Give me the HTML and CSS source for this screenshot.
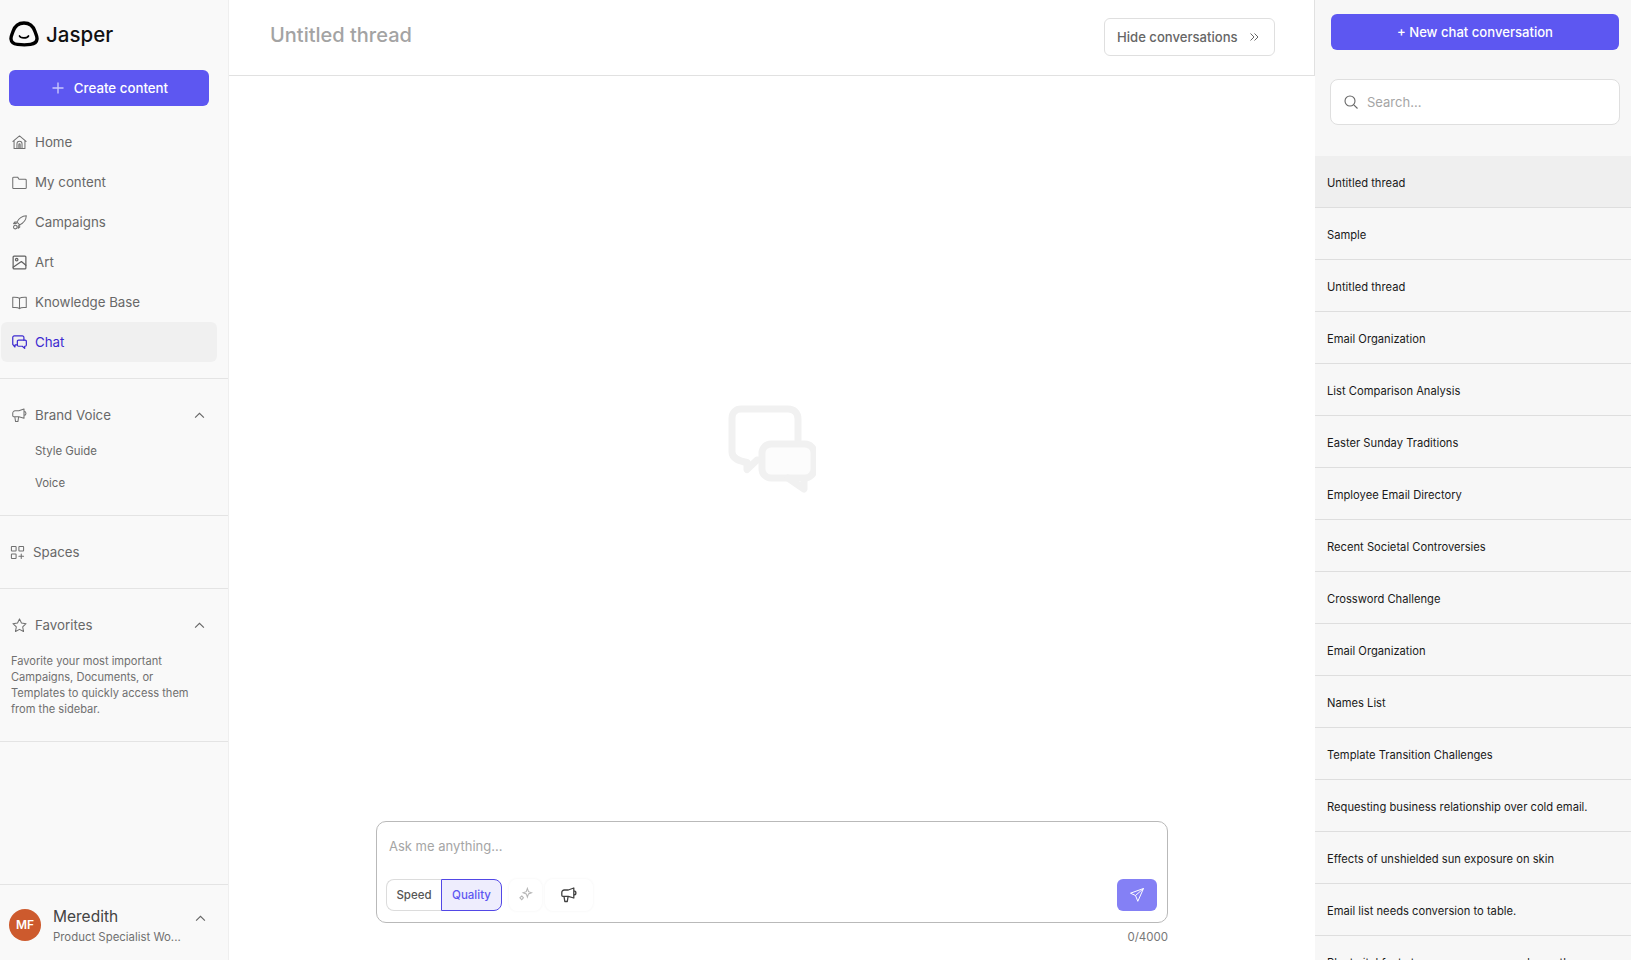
FILE: index.html
```html
<!DOCTYPE html>
<html lang="en">
<head>
<meta charset="utf-8">
<title>Jasper Chat</title>
<link rel="stylesheet" href="styles.css">
</head>
<body>
<div class="app">
  <aside class="sidebar">
    <div class="logo">
      <svg class="logo-mark" viewBox="0 0 30 26" width="30" height="26"><path d="M15 2C8.500 2 5.500 6 4 10.500 3 13.500 1.800 15 2 18c.3 3.500 3 5 6.500 5.400 4 .5 9 .6 13 0 3.500-.5 6.200-2 6.500-5.400.2-3-1-4.500-2-7.500C24.500 6 21.500 2 15 2z" fill="none" stroke="#000" stroke-width="3.400"/><path d="M10.500 15c1 2.600 7.500 2.600 9 0" fill="none" stroke="#000" stroke-width="1.700" stroke-linecap="round"/></svg>
      <span class="logo-text">Jasper</span>
    </div>
    <button class="create-btn"><svg viewBox="0 0 14 14" width="14" height="14"><path d="M7 1.500v11M1.500 7h11" stroke="#c9c7fb" stroke-width="1.400" fill="none"/></svg><span>Create content</span></button>
    <nav class="nav">
      <a class="nav-item"><svg class="ico" viewBox="0 0 16 16"><path d="M1 6.800 8 1l7 5.800M2.200 5.800v8.700h11.600V5.800M5.300 14.500V9.300a2.700 2.700 0 0 1 5.400 0v5.200M7.300 14.500V10a.7.700 0 0 1 1.400 0v4.500"/></svg>Home</a>
      <a class="nav-item"><svg class="ico" viewBox="0 0 16 16"><path d="M.8 3.500V13.500a1 1 0 0 0 1 1h12.400a1 1 0 0 0 1-1V5.500a1 1 0 0 0-1-1H7.500L6 2.300H2a1.200 1.200 0 0 0-1.200 1.200z"/></svg>My content</a>
      <a class="nav-item"><svg class="ico" viewBox="0 0 16 16"><path d="M15.300.8c-4.300.3-7.800 2.200-10 6.800l2.900 2.900c4.800-2.200 6.800-5.500 7.100-9.700zM5.300 7.600H2.900L1.700 9.200l3-.2M8.200 10.500v2.500l-1.600 1.100.2-3M3.500 11a1.900 1.900 0 1 0 .1 3.800 1.900 1.900 0 0 0-.1-3.800z"/></svg>Campaigns</a>
      <a class="nav-item"><svg class="ico ico-dark" viewBox="0 0 16 16"><rect x="1.200" y="1.200" width="13.600" height="13.600" rx="1"/><circle cx="5" cy="5" r="1.300"/><path d="M1.200 13 10 7l4.800 4"/></svg>Art</a>
      <a class="nav-item"><svg class="ico" viewBox="0 0 16 16"><path d="M8 3.500C7 2.500 5.500 2.300 2.500 2.300h-1.700v11h2.700C5.500 13.300 7 13.500 8 14.500c1-1 2.500-1.200 4.500-1.200h2.700v-11h-1.700C10.500 2.300 9 2.500 8 3.500zM8 3.500v11"/></svg>Knowledge Base</a>
      <a class="nav-item nav-active"><svg class="ico" viewBox="0 0 16 16"><path d="M5.500 10.500H3.300l-.2 2.300L.8 10V2.800A1.700 1.700 0 0 1 2.500 1h8.500a1.700 1.700 0 0 1 1.700 1.800v2.700"/><path d="M7 5.500h7a1.300 1.300 0 0 1 1.300 1.300v3.900a1.300 1.300 0 0 1-1.300 1.300h-.5v2.300l-2.500-2.300H7a1.300 1.300 0 0 1-1.300-1.300V6.800A1.300 1.300 0 0 1 7 5.500z"/></svg>Chat</a>
    </nav>
    <section class="sec sec-brand">
      <div class="sec-head"><svg class="ico" viewBox="0 0 16 16"><path d="M.8 5.500A2.500 2.500 0 0 1 3.300 3h4L12.800 1v10L7.300 9.300H1.800a1 1 0 0 1-1-1zM3 9.300 3.800 14.500h2.500l.8-5.200M12.800 3.800a2 2 0 0 1 0 4.200"/></svg><span class="sec-title">Brand Voice</span><svg class="chev" viewBox="0 0 10 6"><path d="M1 5 5 1l4 4"/></svg></div>
      <a class="sub-item">Style Guide</a>
      <a class="sub-item">Voice</a>
    </section>
    <section class="sec sec-spaces">
      <div class="sec-head"><svg class="ico ico-spaces" viewBox="0 0 16 16"><rect x="1.500" y="1.500" width="5" height="5" rx=".6"/><rect x="9.500" y="1.500" width="5" height="5" rx=".6"/><rect x="1.500" y="9.500" width="5" height="5" rx=".6"/><path d="M12 9.500v5M9.500 12h5"/></svg><span class="sec-title">Spaces</span></div>
    </section>
    <section class="sec sec-fav">
      <div class="sec-head"><svg class="ico" viewBox="0 0 16 16"><path d="m8 .9 2.100 4.500 4.900.7-3.600 3.400.9 4.900L8 12.100l-4.300 2.300.9-4.900L1 6.100l4.900-.7z"/></svg><span class="sec-title">Favorites</span><svg class="chev" viewBox="0 0 10 6"><path d="M1 5 5 1l4 4"/></svg></div>
      <p class="fav-text">Favorite your most important Campaigns, Documents, or Templates to quickly access them from the sidebar.</p>
    </section>
    <footer class="user">
      <div class="avatar">MF</div>
      <div class="user-info">
        <div class="user-name">Meredith</div>
        <div class="user-org">Product Specialist Wo...</div>
      </div>
      <svg class="chev chev-user" viewBox="0 0 10 6"><path d="M1 5 5 1l4 4"/></svg>
    </footer>
  </aside>

  <main class="main">
    <header class="main-head">
      <h1 class="thread-title">Untitled thread</h1>
      <button class="hide-btn">Hide conversations<svg viewBox="0 0 12 12" width="12" height="12"><path d="M2.500 2.500 6 6 2.500 9.500M6.500 2.500 10 6 6.500 9.500" fill="none" stroke="#666" stroke-width="1"/></svg></button>
    </header>
    <div class="empty">
      <svg class="empty-icon" viewBox="0 0 90 90" width="90" height="90"><path d="M32 57H31L21 66.500V59.500C14 58 6 56 6 49V15C6 9.500 10 6 15 6H62C68 6 72 10 72 16V38" fill="none" stroke="#f1f1f1" stroke-width="7" stroke-linecap="round" stroke-linejoin="round"/><rect x="36" y="41" width="52" height="34" rx="9" fill="#fcfcfc" stroke="#f1f1f1" stroke-width="7"/><path d="M62 75 78 86V76" fill="none" stroke="#f1f1f1" stroke-width="7" stroke-linecap="round" stroke-linejoin="round"/></svg>
    </div>
    <div class="composer-wrap">
      <div class="composer">
        <div class="placeholder">Ask me anything...</div>
        <div class="composer-row">
          <div class="seg"><span class="seg-a">Speed</span><span class="seg-b">Quality</span></div>
          <button class="tool tool-spark"><svg viewBox="0 0 16 16" width="15" height="15"><path d="M10 1.500 11.200 5l3.300 1.200-3.300 1.200L10 10.800 8.800 7.400 5.500 6.200 8.800 5zM4 9.500l1.800 2L4 13.500l-2-2z" fill="none" stroke="#b5b5b5" stroke-width="1.100"/></svg></button>
          <button class="tool tool-mega"><svg viewBox="0 0 16 16" width="16" height="16"><path d="M.8 5.500A2.500 2.500 0 0 1 3.300 3h4L12.800 1v10L7.300 9.300H1.800a1 1 0 0 1-1-1zM3 9.300 3.800 14.500h2.500l.8-5.200M12.800 3.800a2 2 0 0 1 0 4.200" fill="none" stroke="#404040" stroke-width="1.300" stroke-linejoin="round"/></svg></button>
          <button class="send"><svg viewBox="0 0 16 16" width="16" height="16"><path d="M14.500 1.500 1.500 6.200l5 2.300 2.300 5.800zM14.500 1.500l-8 7" fill="none" stroke="#fff" stroke-width="1" stroke-linejoin="round"/></svg></button>
        </div>
      </div>
      <div class="counter">0/4000</div>
    </div>
  </main>

  <aside class="threads">
    <div class="threads-top">
      <button class="new-btn">+ New chat conversation</button>
      <div class="search"><svg viewBox="0 0 16 16" width="16" height="16"><circle cx="7" cy="7" r="5" fill="none" stroke="#666" stroke-width="1.100"/><path d="m10.800 10.800 3.700 3.700" stroke="#666" stroke-width="1.100"/></svg><span>Search...</span></div>
    </div>
    <ul class="list">
      <li class="row row-active">Untitled thread</li>
      <li class="row">Sample</li>
      <li class="row">Untitled thread</li>
      <li class="row">Email Organization</li>
      <li class="row">List Comparison Analysis</li>
      <li class="row">Easter Sunday Traditions</li>
      <li class="row">Employee Email Directory</li>
      <li class="row">Recent Societal Controversies</li>
      <li class="row">Crossword Challenge</li>
      <li class="row">Email Organization</li>
      <li class="row">Names List</li>
      <li class="row">Template Transition Challenges</li>
      <li class="row">Requesting business relationship over cold email.</li>
      <li class="row">Effects of unshielded sun exposure on skin</li>
      <li class="row">Email list needs conversion to table.</li>
      <li class="row">Plant vital facts to ensure success and growth</li>
    </ul>
  </aside>
</div>
</body>
</html>
```
FILE: styles.css
```css
* { box-sizing: border-box; }
html, body { margin: 0; height: 100%; overflow: hidden; }
body { font-family: Inter, "Liberation Sans", sans-serif; color: #666; background: #fff; }
button { font-family: inherit; cursor: pointer; }
.app { display: grid; grid-template-columns: 229px 1086px 316px; height: 960px; overflow: hidden; }

.sidebar { background: #f9f9f9; border-right: 1px solid #efefef; display: flex; flex-direction: column; height: 960px; }
.logo { display: flex; align-items: center; gap: 7px; height: 70px; padding: 0 0 2px 9px; }
.logo-mark { flex: none; }
.logo-text { font-size: 20.500px; font-weight: 500; color: #111; }
.create-btn { width: 200px; height: 36px; margin-left: 9px; border: 0; border-radius: 6px; background: #5d57f1; color: #fff; font-size: 13.300px; font-weight: 500; display: flex; align-items: center; justify-content: center; gap: 9px; flex: none; padding: 0 0 0 1px; }
.nav { display: flex; flex-direction: column; padding: 16px 0 16px 1px; border-bottom: 1px solid #e4e4e4; }
.nav-item { width: 216px; height: 40px; display: flex; align-items: center; gap: 8px; padding-left: 11px; font-size: 13.300px; color: #686868; border-radius: 6px; }
.nav-active { background: #f0f0f0; color: #3d2bd0; }
.nav-active .ico { stroke: #3d2bd0; stroke-width: 1.300; }
.ico { width: 15px; height: 15px; flex: none; fill: none; stroke: #707070; stroke-width: 1.100; stroke-linejoin: round; stroke-linecap: round; }
.ico-dark { stroke: #606060; stroke-width: 1.300; }

.sec { border-bottom: 1px solid #e4e4e4; flex: none; }
.sec-brand { height: 137px; padding-top: 16px; }
.sec-spaces { height: 73px; padding-top: 16px; }
.sec-fav { height: 153px; padding-top: 16px; }
.sec-head { height: 40px; display: flex; align-items: center; gap: 8px; padding: 0 23px 0 12px; font-size: 13.300px; color: #686868; }
.sec-title { flex: 1; }
.ico-spaces { margin-left: -2px; }
.chev { width: 11px; height: 7px; flex: none; fill: none; stroke: #666; stroke-width: 1; }
.sub-item { display: flex; align-items: center; height: 32px; padding-left: 35px; font-size: 11.400px; color: #686868; }
.fav-text { margin: 8px 0 0; padding: 0 30px 0 11px; font-size: 11.100px; line-height: 16px; color: #707070; }

.user { margin-top: auto; height: 76px; border-top: 1px solid #e4e4e4; display: flex; align-items: center; padding: 0 22px 0 9px; }
.avatar { width: 32px; height: 32px; border-radius: 50%; background: #cd5a2d; color: #fff; font-size: 12px; font-weight: 600; display: flex; align-items: center; justify-content: center; flex: none; margin-top: 4px; }
.user-info { margin-left: 12px; flex: 1; margin-top: 10px; }
.user-name { font-size: 15.500px; line-height: 20px; color: #444; }
.user-org { font-size: 11.400px; line-height: 21px; color: #707070; white-space: nowrap; }
.chev-user { align-self: flex-start; margin-top: 30px; }

.main { display: flex; flex-direction: column; background: #fff; min-width: 0; height: 960px; }
.main-head { height: 76px; flex: none; border-bottom: 1px solid #e1e1e1; border-right: 1px solid #e1e1e1; display: flex; align-items: center; justify-content: space-between; padding: 0 39px 0 41px; }
.thread-title { margin: 0 0 5px; font-size: 20px; font-weight: 500; color: #a3a3a3; }
.hide-btn { height: 38px; width: 171px; margin-bottom: 2px; background: #fff; border: 1px solid #dfdfdf; border-radius: 6px; font-size: 13.100px; font-weight: 500; color: #666; display: flex; align-items: center; justify-content: space-between; padding: 0 14px 0 12px; }
.empty { flex: 1; display: flex; align-items: flex-start; justify-content: center; padding: 327px 2px 0 0; }
.composer-wrap { flex: none; width: 792px; align-self: center; margin-bottom: 15px; }
.composer { height: 102px; border: 1px solid #b9b9b9; border-radius: 10px; padding: 0 10px 0 9px; display: flex; flex-direction: column; justify-content: space-between; }
.placeholder { font-size: 13px; color: #a5a5a5; padding: 15px 0 0 3px; line-height: 18px; }
.composer-row { display: flex; align-items: center; padding-bottom: 11px; }
.seg { display: flex; height: 32px; font-size: 11.500px; font-weight: 500; }
.seg span { display: flex; align-items: center; justify-content: center; }
.seg-a { width: 55px; border: 1px solid #dcdcdc; border-right: 0; border-radius: 8px 0 0 8px; color: #555; }
.seg-b { width: 61px; border: 1px solid #5247e6; border-radius: 0 8px 8px 0; background: #eeedfd; color: #5d57f1; }
.tool { height: 32px; border: 0; background: #fff; border-radius: 8px; box-shadow: 0 0 3px rgba(0,0,0,.05); display: flex; align-items: center; justify-content: center; padding: 0; }
.tool-spark { width: 33px; margin-left: 7px; }
.tool-mega { width: 48px; margin-left: 3px; }
.send { margin: 1px 0 0 auto; width: 40px; height: 32px; border: 0; border-radius: 6px; background: #8480f5; display: flex; align-items: center; justify-content: center; padding: 0; }
.counter { text-align: right; font-size: 11.500px; line-height: 16px; color: #777; padding-top: 6px; }

.threads { background: #f7f7f7; height: 960px; overflow: hidden; display: flex; flex-direction: column; }
.threads-top { flex: none; height: 156px; padding: 14px 11px 0 15px; }
.new-btn { display: block; width: 288px; margin-left: 1px; height: 36px; border: 0; border-radius: 6px; background: #5d57f1; color: #fff; font-size: 13.100px; font-weight: 500; }
.search { width: 290px; height: 46px; margin-top: 29px; background: #fff; border: 1px solid #dfdfdf; border-radius: 8px; display: flex; align-items: center; gap: 8px; padding-left: 12px; font-size: 13px; color: #a5a5a5; }
.list { list-style: none; margin: 0; padding: 0; flex: none; }
.row { height: 52px; display: flex; align-items: center; padding: 2px 0 0 12px; border-bottom: 1px solid #dedede; font-size: 11.200px; color: #1a1a1a; white-space: nowrap; }
.row-active { background: #efefef; }
```
